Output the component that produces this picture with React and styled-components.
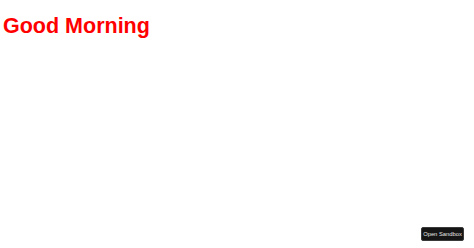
import styled, { createGlobalStyle } from "styled-components";

const GlobalStyle = createGlobalStyle`
  html, body {
    margin: 0;
    padding: 0;
    background: #ffffff;
  }
  body {
    font-family: "Liberation Sans", Arial, sans-serif;
  }
`;

const Page = styled.div`
  position: relative;
  width: 474px;
  height: 248px;
  padding: 14px 3px 0;
  box-sizing: border-box;
`;

const Greeting = styled.h1`
  margin: 0;
  font-size: 21.5px;
  font-weight: 700;
  color: #ff0000;
`;

const SandboxButton = styled.button`
  position: absolute;
  right: 10px;
  bottom: 7px;
  width: 43px;
  height: 14px;
  padding: 0;
  border: 1px solid #3a3a3a;
  border-radius: 2px;
  background: #151515;
  color: #e8e8e8;
  font-family: "Liberation Sans", Arial, sans-serif;
  font-size: 5.8px;
  line-height: 12px;
  cursor: pointer;
`;

const App = () => {
  return (
    <>
      <GlobalStyle />
      <Page>
        <Greeting>Good Morning</Greeting>
        <SandboxButton>Open Sandbox</SandboxButton>
      </Page>
    </>
  );
};

export default App;
